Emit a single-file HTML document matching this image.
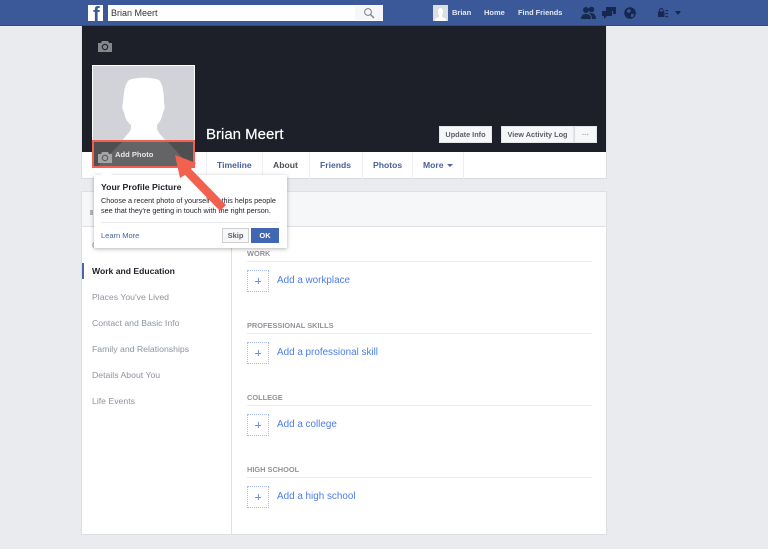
<!DOCTYPE html>
<html><head><meta charset="utf-8"><style>
html,body{margin:0;padding:0}
body{width:768px;height:549px;overflow:hidden;background:#e9ebee;position:relative;font-family:"Liberation Sans",sans-serif}
#w{position:absolute;left:0;top:0;width:768px;height:549px;filter:blur(.35px)}
.a{position:absolute;white-space:nowrap;line-height:1}
.box{position:absolute;box-sizing:border-box}
.side{left:92px;font-size:8.700px;color:#8d949e}
.sec{left:247px;font-size:7.400px;font-weight:bold;color:#90949c}
.ln{position:absolute;left:247px;width:345px;height:1px;background:#e9ebee}
.plus{position:absolute;left:247px;width:22px;height:22px;box-sizing:border-box;border:1px dotted #a3bbf2}
.plus:before{content:"";position:absolute;left:7px;top:9.500px;width:6px;height:1px;background:#6f95ea}
.plus:after{content:"";position:absolute;left:9.500px;top:7px;width:1px;height:6px;background:#6f95ea}
.add{left:277px;font-size:9.900px;color:#4c7de8}
.tab{top:161px;font-size:8.600px;font-weight:bold;color:#4b619a}
.v{position:absolute;top:152px;width:1px;height:27px;background:#eceef1}
.btn{position:absolute;box-sizing:border-box;background:#f6f7f9;border:1px solid #e4e5e8;font-size:7.300px;font-weight:bold;color:#5a5e66;text-align:center}
</style></head><body><div id="w">
<div class="box" style="left:0;top:0;width:768px;height:26px;background:#3b5998;border-bottom:1px solid #304a80"></div>
<div class="box" style="left:88px;top:5px;width:15px;height:16px;background:#fff"></div>
<div class="a" style="left:93px;top:5px;font-size:20px;font-weight:bold;color:#3b5998">f</div>
<div class="box" style="left:108px;top:5px;width:275px;height:16px;background:#fff"></div>
<div class="box" style="left:355px;top:6px;width:28px;height:14px;background:#f6f7f9"></div>
<div class="a" style="left:111px;top:9px;font-size:9px;color:#333">Brian Meert</div>
<svg class="box" style="left:363px;top:7px" width="12" height="12" viewBox="0 0 12 12"><circle cx="5" cy="5" r="3.400" fill="none" stroke="#7a808c" stroke-width="1"/><path d="M7.500 7.500L11 11" stroke="#7a808c" stroke-width="1.300"/></svg>
<svg class="box" style="left:433px;top:5px" width="15" height="16" viewBox="0 0 15 16"><rect width="15" height="16" fill="#dcdee2"/><path d="M2 16V14C3 13 5.500 12.500 6 11.500V10C4.500 8 4.500 3 7.500 3S10.500 8 9 10V11.500C9.500 12.500 12 13 13 14V16Z" fill="#fff"/></svg>
<div class="a" style="left:452px;top:9px;font-size:7.500px;font-weight:bold;color:#e4e8f2">Brian</div>
<div class="a" style="left:484px;top:9px;font-size:7.500px;font-weight:bold;color:#e4e8f2">Home</div>
<div class="a" style="left:518px;top:9px;font-size:7.400px;font-weight:bold;color:#e4e8f2">Find Friends</div>
<svg class="box" style="left:581px;top:6px" width="60" height="14" viewBox="0 0 60 14" fill="#16284e"><circle cx="5" cy="4" r="3"/><path d="M0 13C0 9 2.500 8 5 8S10 9 10 13Z"/><circle cx="10.500" cy="3.500" r="2.800"/><path d="M8 7.500C11 6 15 8 15 13H11C11 10 10 8.500 8 7.500Z"/><path d="M25 1H35V8H32V5H25Z"/><path d="M21 5H31V10H26L23 13V10H21Z"/><circle cx="49" cy="7" r="5.800"/><path d="M46 4L49 3L50 5L48 7L46 6ZM50 8L53 8L52 11L50 11Z" fill="#3b5998"/></svg>
<svg class="box" style="left:658px;top:8px" width="24" height="10" viewBox="0 0 24 10" fill="#16284e"><rect x="0" y="3.500" width="6.500" height="5.500"/><path d="M1.500 4V2.500C1.500 0 5 0 5 2.500V4" fill="none" stroke="#16284e"/><rect x="7.500" y="2" width="2.500" height="1.200"/><rect x="7.500" y="5" width="2.500" height="1.200"/><rect x="7.500" y="8" width="2.500" height="1.200"/><path d="M17 3H23L20 7Z"/></svg>

<div class="box" style="left:81px;top:26px;width:526px;height:153px;background:#dddfe2"></div>
<div class="box" style="left:82px;top:26px;width:524px;height:126px;background:#1d2029"></div>
<div class="box" style="left:82px;top:152px;width:524px;height:27px;background:#fff;border-bottom:1px solid #d8dade"></div>
<svg class="box" style="left:98px;top:41px" width="14" height="11" viewBox="0 0 14 11"><path d="M0 2H3L4 0H10L11 2H14V11H0Z" fill="#85878d"/><circle cx="7" cy="6" r="2.700" fill="none" stroke="#1d2029" stroke-width="1.100"/></svg>

<div class="box" style="left:92px;top:65px;width:103px;height:104px;background:#fff"></div>
<svg class="box" style="left:93px;top:66px" width="101" height="102" viewBox="93 66 101 102"><rect x="93" y="66" width="101" height="102" fill="#d1d3d9"/><path d="M122 141C125 136 131 132 131 128V125C127 122 125 118 124 112C122 110 122 106 123 103C124 90 125 84 129 80C136 77 152 77 159 80C163 84 164 94 164 103C165 106 165 110 163 112C162 118 160 122 157 125V128C157 132 162 136 166 141Z" fill="#fff"/></svg>
<svg class="box" style="left:92px;top:140px" width="103" height="28" viewBox="0 0 103 28"><rect width="103" height="28" fill="#4f4f51"/><path d="M31 1H75L100 28H4Z" fill="#646466"/><rect x="1" y="1" width="101" height="26" fill="none" stroke="#f0614f" stroke-width="2"/></svg>
<svg class="box" style="left:98px;top:152px" width="14" height="11" viewBox="0 0 14 11"><path d="M0 2H3L4 0H10L11 2H14V11H0Z" fill="#a4a4a6"/><circle cx="7" cy="6" r="2.700" fill="none" stroke="#5b5b5d" stroke-width="1.100"/></svg>
<div class="a" style="left:115px;top:151px;font-size:7.600px;font-weight:bold;color:#e6e6e6">Add Photo</div>
<div class="a" style="left:206px;top:127px;font-size:15px;color:#fff;-webkit-text-stroke:.2px #fff">Brian Meert</div>

<div class="btn" style="left:439px;top:126px;width:53px;height:17px;line-height:15px">Update Info</div>
<div class="btn" style="left:501px;top:126px;width:73px;height:17px;line-height:15px">View Activity Log</div>
<div class="btn" style="left:574px;top:126px;width:23px;height:17px;line-height:15px;border-left:1px solid #dcdde0;color:#9a9da3">···</div>

<div class="v" style="left:206px"></div><div class="v" style="left:262px"></div><div class="v" style="left:309px"></div><div class="v" style="left:362px"></div><div class="v" style="left:412px"></div><div class="v" style="left:463px"></div>
<div class="a tab" style="left:217px">Timeline</div>
<div class="a tab" style="left:273px;color:#4b4f56">About</div>
<div class="a tab" style="left:320px">Friends</div>
<div class="a tab" style="left:373px">Photos</div>
<div class="a tab" style="left:423px">More</div>
<div class="box" style="left:447px;top:164px;border:3px solid transparent;border-top:3px solid #4b619a;border-bottom:0"></div>

<div class="box" style="left:81px;top:191px;width:526px;height:344px;background:#fff;border:1px solid #dddfe2"></div>
<div class="box" style="left:82px;top:192px;width:524px;height:35px;background:#f6f7f9;border-bottom:1px solid #dddfe2"></div>
<div class="box" style="left:231px;top:227px;width:1px;height:307px;background:#dddfe2"></div>
<div class="box" style="left:90px;top:210px;width:3px;height:5px;background:#b0b3b8"></div>
<div class="a side" style="top:241px">Overview</div>
<div class="box" style="left:82px;top:263px;width:2px;height:16px;background:#4b67a6"></div>
<div class="a side" style="left:92px;top:267px;color:#1d2129;font-weight:bold;font-size:8.600px">Work and Education</div>
<div class="a side" style="top:293px">Places You've Lived</div>
<div class="a side" style="top:319px">Contact and Basic Info</div>
<div class="a side" style="top:345px">Family and Relationships</div>
<div class="a side" style="top:371px">Details About You</div>
<div class="a side" style="top:397px">Life Events</div>

<div class="a sec" style="top:250px">WORK</div><div class="ln" style="top:261px"></div>
<div class="plus" style="top:270px"></div><div class="a add" style="top:276px">Add a workplace</div>
<div class="a sec" style="top:322px">PROFESSIONAL SKILLS</div><div class="ln" style="top:333px"></div>
<div class="plus" style="top:342px"></div><div class="a add" style="top:348px">Add a professional skill</div>
<div class="a sec" style="top:394px">COLLEGE</div><div class="ln" style="top:405px"></div>
<div class="plus" style="top:414px"></div><div class="a add" style="top:420px">Add a college</div>
<div class="a sec" style="top:466px">HIGH SCHOOL</div><div class="ln" style="top:477px"></div>
<div class="plus" style="top:486px"></div><div class="a add" style="top:492px">Add a high school</div>

<div class="box" style="left:94px;top:175px;width:193px;height:73px;background:#fff;box-shadow:0 1px 4px rgba(0,0,0,.3)"></div>
<div class="box" style="left:103px;top:171px;width:8px;height:8px;background:#fff;transform:rotate(45deg)"></div>
<div class="a" style="left:101px;top:183px;font-size:8.700px;font-weight:bold;color:#1d2129">Your Profile Picture</div>
<div class="a" style="left:101px;top:197px;font-size:7.250px;color:#1d2129">Choose a recent photo of yourself so this helps people</div>
<div class="a" style="left:101px;top:207px;font-size:7.250px;color:#1d2129">see that they're getting in touch with the right person.</div>
<div class="box" style="left:101px;top:222px;width:178px;height:1px;background:#e9ebee"></div>
<div class="a" style="left:101px;top:232px;font-size:7.500px;color:#4b619a">Learn More</div>
<div class="btn" style="left:222px;top:228px;width:27px;height:15px;line-height:13px;font-size:7.500px;border-color:#ced0d4">Skip</div>
<div class="btn" style="left:251px;top:228px;width:28px;height:15px;line-height:13px;font-size:7.500px;color:#fff;background:#4267b2;border-color:#4267b2">OK</div>

<svg class="box" style="left:0;top:0" width="768" height="549" viewBox="0 0 768 549"><path d="M175 155L196 163L191 169L226 205L220 211L185 175L180 178Z" fill="#f2604e"/></svg>
</div></body></html>
